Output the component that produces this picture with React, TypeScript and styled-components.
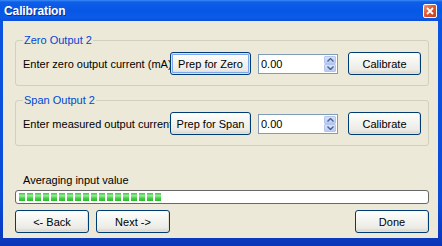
import React from "react";
import styled, { createGlobalStyle } from "styled-components";

const Global = createGlobalStyle`
  html, body { margin: 0; padding: 0; background: #ECE9D8; }
  body { font-family: "Liberation Sans", Arial, sans-serif; font-size: 11px; }
  * { box-sizing: border-box; }
`;

const Window = styled.div`
  width: 442px;
  height: 246px;
  display: flex;
  flex-direction: column;
  background: #0B54DF;
  overflow: hidden;
`;

const TitleBar = styled.div`
  height: 21px;
  flex: none;
  display: flex;
  align-items: center;
  justify-content: space-between;
  padding: 0 5px 0 4px;
  background: linear-gradient(to bottom, #3A8CF6 0px, #0F5EE8 2px, #0757E6 50%, #0B5AE8 85%, #0A4FD8 100%);
`;

const Title = styled.span`
  font-family: "Liberation Sans", Arial, sans-serif;
  font-weight: bold;
  font-size: 12px;
  color: #fff;
  text-shadow: 1px 1px 0 #0A2F9A;
  letter-spacing: -0.1px;
`;

const CloseButton = styled.div`
  width: 14px;
  height: 14px;
  border: 1px solid #fff;
  border-radius: 2px;
  background: linear-gradient(135deg, #F09878 0%, #E2582F 45%, #C8401B 100%);
  display: flex;
  align-items: center;
  justify-content: center;
`;

const Frame = styled.div`
  flex: 1;
  display: flex;
  padding: 0 4px 8px 3px;
  background: linear-gradient(to bottom, #0B54DF 0%, #0A4BD6 80%, #0A36B8 100%);
`;

const Body = styled.div`
  flex: 1;
  background: #ECE9D8;
  display: flex;
  flex-direction: column;
  padding: 13px 9px 0 12px;
`;

const Group = styled.fieldset<{ $gap?: number }>`
  margin: ${(p) => p.$gap ?? 0}px 0 0 0;
  padding: 5px 7px 10px 7px;
  border: 1px solid #D0D0BF;
  border-radius: 3px;
  min-width: 0;
`;

const Legend = styled.legend`
  padding: 0 1px;
  color: #0046D5;
  font-size: 11px;
  line-height: 13px;
`;

const Row = styled.div`
  display: flex;
  align-items: center;
  height: 23px;
`;

const Label = styled.span`
  width: 147px;
  flex: none;
  white-space: nowrap;
  overflow: hidden;
  color: #000;
`;

const Button = styled.button<{ $w: number; $focused?: boolean; $ml?: number }>`
  width: ${(p) => p.$w}px;
  height: 23px;
  flex: none;
  margin-left: ${(p) => p.$ml ?? 0}px;
  padding: 0;
  font-family: "Liberation Sans", Arial, sans-serif;
  font-size: 11px;
  color: #000;
  border: 1px solid #003C74;
  border-radius: 3px;
  background: linear-gradient(to bottom, #FFFFFF 0%, #F7F7F4 30%, #ECEBE6 80%, #D8D3C7 100%);
  box-shadow: ${(p) =>
    p.$focused
      ? "inset 0 0 0 1px #CEE7FF, inset 0 0 0 2px #7FA6F0"
      : "inset -1px -1px 0 #E3E0D5"};
`;

const Spin = styled.div`
  width: 80px;
  height: 20px;
  flex: none;
  margin-left: 7px;
  border: 1px solid #7F9DB9;
  background: #fff;
  display: flex;
  align-items: stretch;
`;

const SpinValue = styled.span`
  flex: 1;
  padding-left: 2px;
  display: flex;
  align-items: center;
  color: #000;
`;

const SpinButtons = styled.div`
  width: 12px;
  margin: 1px 1px 1px 0;
  display: flex;
  flex-direction: column;
  gap: 0;
`;

const SpinHalf = styled.div`
  flex: 1;
  background: linear-gradient(to bottom, #D6E2FB, #B9CBF5);
  border: 1px solid #B3C6F0;
  border-radius: 1px;
  display: flex;
  align-items: center;
  justify-content: center;
`;

const Caption = styled.div`
  margin-top: 28px;
  padding-left: 8px;
  line-height: 13px;
  color: #000;
`;

const Progress = styled.div`
  margin-top: 3px;
  height: 14px;
  border: 1px solid #686868;
  border-radius: 3px;
  background: #fff;
  padding: 2px 3px;
  display: flex;
  gap: 2px;
`;

const Chunk = styled.div`
  width: 6px;
  height: 100%;
  background: linear-gradient(to bottom, #3CC43C 0%, #9BEA9B 35%, #4ED24E 60%, #28B828 100%);
`;

const Footer = styled.div`
  margin-top: 6px;
  display: flex;
  align-items: center;
  gap: 7px;
`;

const Spacer = styled.div`
  flex: 1;
`;

const Arrow = ({ up }: { up?: boolean }) => (
  <svg width="7" height="4" viewBox="0 0 7 4">
    <path
      d={up ? "M0.5 3.5 L3.5 0.5 L6.5 3.5" : "M0.5 0.5 L3.5 3.5 L6.5 0.5"}
      fill="none"
      stroke="#4D6185"
      strokeWidth="1.4"
    />
  </svg>
);

const SpinBox = ({ value }: { value: string }) => (
  <Spin>
    <SpinValue>{value}</SpinValue>
    <SpinButtons>
      <SpinHalf>
        <Arrow up />
      </SpinHalf>
      <SpinHalf>
        <Arrow />
      </SpinHalf>
    </SpinButtons>
  </Spin>
);

export default function App() {
  const chunks = Array.from({ length: 18 });
  return (
    <>
      <Global />
      <Window>
        <TitleBar>
          <Title>Calibration</Title>
          <CloseButton>
            <svg width="8" height="8" viewBox="0 0 8 8">
              <path d="M1 1 L7 7 M7 1 L1 7" stroke="#fff" strokeWidth="1.8" />
            </svg>
          </CloseButton>
        </TitleBar>
        <Frame>
          <Body>
            <Group>
              <Legend>Zero Output 2</Legend>
              <Row>
                <Label>Enter zero output current (mA)</Label>
                <Button $w={81} $focused>Prep for Zero</Button>
                <SpinBox value="0.00" />
                <Button $w={73} $ml={10}>Calibrate</Button>
              </Row>
            </Group>
            <Group $gap={8}>
              <Legend>Span Output 2</Legend>
              <Row>
                <Label>Enter measured output current (mA)</Label>
                <Button $w={81}>Prep for Span</Button>
                <SpinBox value="0.00" />
                <Button $w={73} $ml={10}>Calibrate</Button>
              </Row>
            </Group>
            <Caption>Averaging input value</Caption>
            <Progress>
              {chunks.map((_, i) => (
                <Chunk key={i} />
              ))}
            </Progress>
            <Footer>
              <Button $w={74}>&lt;- Back</Button>
              <Button $w={74}>Next -&gt;</Button>
              <Spacer />
              <Button $w={74}>Done</Button>
            </Footer>
          </Body>
        </Frame>
      </Window>
    </>
  );
}
